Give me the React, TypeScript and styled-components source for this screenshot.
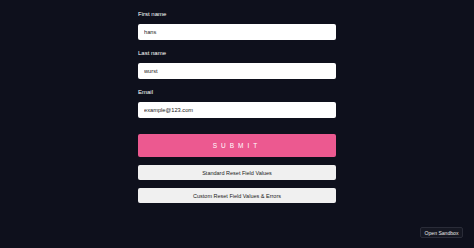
import React from 'react'
import styled, { createGlobalStyle } from 'styled-components'

const GlobalStyle = createGlobalStyle`
  html, body {
    margin: 0;
    padding: 0;
    background: #0e101c;
    font-family: "Liberation Sans", Arial, sans-serif;
  }
`

const Page = styled.div`
  width: 474px;
  height: 248px;
  background: #0e101c;
  position: relative;
  overflow: hidden;
`

const Form = styled.form`
  width: 198px;
  margin: 0 auto;
  padding-top: 10px;
  display: flex;
  flex-direction: column;
`

const Label = styled.label`
  color: #ffffff;
  font-size: 6px;
  line-height: 8px;
  margin-bottom: 6px;
`

const Input = styled.input`
  box-sizing: border-box;
  width: 100%;
  height: 16px;
  border: none;
  border-radius: 2px;
  background: #ffffff;
  padding: 0 6px;
  font-family: "Liberation Sans", Arial, sans-serif;
  font-size: 5.7px;
  color: #222;
  margin: 0 0 9px;
  outline: none;
`

const Submit = styled.button`
  box-sizing: border-box;
  width: 100%;
  height: 23px;
  margin-top: 7px;
  border: none;
  border-radius: 2px;
  background: #ec5990;
  color: #ffffff;
  font-family: "Liberation Sans", Arial, sans-serif;
  font-size: 6.5px;
  letter-spacing: 4px;
  text-transform: uppercase;
`

const ResetButton = styled.button<{ $gap: number }>`
  box-sizing: border-box;
  width: 100%;
  height: 15px;
  margin-top: ${p => p.$gap}px;
  border: none;
  border-radius: 2px;
  background: #f0f0f0;
  color: #222;
  font-family: "Liberation Sans", Arial, sans-serif;
  font-size: 5.5px;
`

const SandboxButton = styled.button`
  position: absolute;
  right: 11px;
  bottom: 10px;
  height: 11px;
  padding: 0 3.5px;
  border: 1px solid #2a2c38;
  border-radius: 2px;
  background: #151722;
  color: #e8e8e8;
  font-family: "Liberation Sans", Arial, sans-serif;
  font-size: 5.1px;
`

export default function App() {
  return (
    <Page>
      <GlobalStyle />
      <Form onSubmit={e => e.preventDefault()}>
        <Label>First name</Label>
        <Input defaultValue="hans" />
        <Label>Last name</Label>
        <Input defaultValue="wurst" />
        <Label>Email</Label>
        <Input defaultValue="example@123.com" />
        <Submit type="submit">Submit</Submit>
        <ResetButton type="button" $gap={8}>Standard Reset Field Values</ResetButton>
        <ResetButton type="button" $gap={8}>Custom Reset Field Values &amp; Errors</ResetButton>
      </Form>
      <SandboxButton type="button">Open Sandbox</SandboxButton>
    </Page>
  )
}
